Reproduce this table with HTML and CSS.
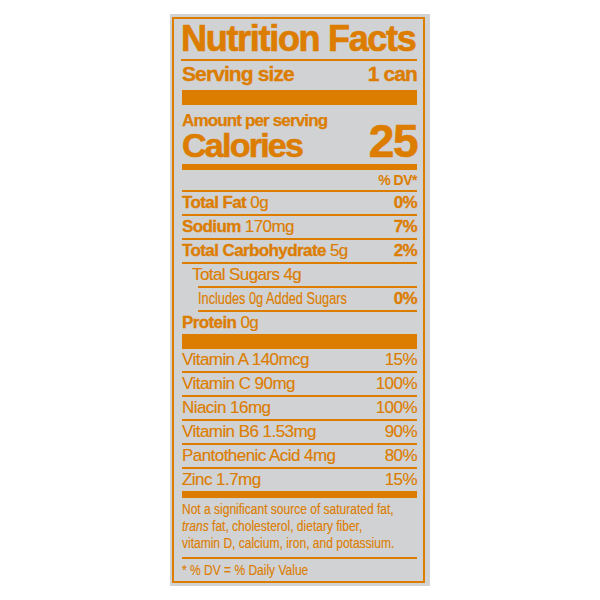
FILE: index.html
```html
<!DOCTYPE html>
<html lang="en">
<head>
<meta charset="utf-8">
<title>Nutrition Facts</title>
<link rel="stylesheet" href="styles.css">
</head>
<body>
<div class="panel">
  <section class="label">
    <h1 class="title">Nutrition Facts</h1>
    <div class="serving"><span>Serving size</span><span>1 can</span></div>
    <div class="bar bar-thick"></div>
    <div class="amount">Amount per serving</div>
    <div class="calories"><span class="cal-label">Calories</span><span class="cal-value">25</span></div>
    <div class="bar bar-med"></div>
    <div class="dv-head">% DV*</div>
    <ul class="rows">
      <li class="row"><span><b>Total Fat</b> 0g</span><b>0%</b></li>
      <li class="row"><span><b>Sodium</b> 170mg</span><b>7%</b></li>
      <li class="row"><span><b>Total Carbohydrate</b> 5g</span><b>2%</b></li>
      <li class="row indent1"><span>Total Sugars 4g</span></li>
      <li class="row indent2"><span class="narrow">Includes 0g Added Sugars</span><b>0%</b></li>
      <li class="row"><span><b>Protein</b> 0g</span></li>
    </ul>
    <div class="bar bar-thick bar-vit"></div>
    <ul class="rows vitamins">
      <li class="row"><span>Vitamin A 140mcg</span><span>15%</span></li>
      <li class="row"><span>Vitamin C 90mg</span><span>100%</span></li>
      <li class="row"><span>Niacin 16mg</span><span>100%</span></li>
      <li class="row"><span>Vitamin B6 1.53mg</span><span>90%</span></li>
      <li class="row"><span>Pantothenic Acid 4mg</span><span>80%</span></li>
      <li class="row"><span>Zinc 1.7mg</span><span>15%</span></li>
    </ul>
    <div class="bar bar-foot"></div>
    <div class="note-wrap">
      <p class="note">Not a significant source of saturated fat,<br><i>trans</i> fat, cholesterol, dietary fiber,<br>vitamin D, calcium, iron, and potassium.</p>
    </div>
    <div class="legend-wrap">
      <p class="legend">* % DV = % Daily Value</p>
    </div>
  </section>
</div>
</body>
</html>
```
FILE: styles.css
```css
html, body {
  margin: 0;
  padding: 0;
  background: #ffffff;
}
body {
  width: 600px;
  height: 600px;
  display: flex;
  align-items: center;
  justify-content: center;
  font-family: "Liberation Sans", Arial, sans-serif;
  color: #dc7d00;
}
.panel {
  width: 260px;
  box-sizing: border-box;
  padding: 3px 5px 3px 2px;
  background: #d1d2d4;
}
.label {
  border: 2px solid #dc7d00;
  padding: 0 6px 0 8px;
  overflow: hidden;
}
.title {
  margin: 0 0 0 -1px;
  font-size: 36px;
  line-height: 40px;
  font-weight: 700;
  letter-spacing: -1.3px;
  -webkit-text-stroke: 0.7px #dc7d00;
  border-bottom: 2px solid #dc7d00;
  white-space: nowrap;
}
.serving {
  display: flex;
  justify-content: space-between;
  padding-top: 1px;
  font-size: 21px;
  line-height: 24px;
  font-weight: 700;
  letter-spacing: -0.9px;
  -webkit-text-stroke: 0.35px #dc7d00;
}
.bar {
  background: #dc7d00;
}
.bar-thick {
  height: 15px;
  margin-top: 4px;
}
.bar-vit {
  margin-top: 0;
}
.bar-med {
  height: 6px;
}
.bar-foot {
  height: 7px;
}
.amount {
  padding-top: 7px;
  font-size: 17px;
  line-height: 18px;
  font-weight: 700;
  letter-spacing: -0.85px;
  -webkit-text-stroke: 0.25px #dc7d00;
}
.calories {
  display: flex;
  justify-content: space-between;
  align-items: baseline;
  height: 34px;
  font-weight: 700;
}
.cal-label {
  font-size: 34px;
  line-height: 26px;
  letter-spacing: -1.75px;
  -webkit-text-stroke: 0.6px #dc7d00;
}
.cal-value {
  font-size: 46px;
  line-height: 22px;
  letter-spacing: -1.5px;
  -webkit-text-stroke: 0.7px #dc7d00;
}
.dv-head {
  text-align: right;
  font-size: 14px;
  line-height: 20px;
  font-weight: 700;
  letter-spacing: -0.5px;
  border-bottom: 2px solid #dc7d00;
}
.rows {
  list-style: none;
  margin: 0;
  padding: 0;
}
.row {
  display: flex;
  justify-content: space-between;
  align-items: baseline;
  font-size: 17px;
  line-height: 22px;
  letter-spacing: -0.6px;
  border-bottom: 2px solid #dc7d00;
  white-space: nowrap;
  -webkit-text-stroke: 0.15px #dc7d00;
}
.row:last-child {
  border-bottom: 0;
}
.row b {
  font-weight: 700;
  -webkit-text-stroke: 0.3px #dc7d00;
}
.indent1 {
  padding-left: 10px;
  border-bottom: 0;
}
.indent2 {
  border-top: 2px solid #dc7d00;
  margin-left: 16px;
}
.narrow {
  min-width: 0;
  flex: 0 1 150px;
  font-size: 17px;
  letter-spacing: 0;
  transform: scaleX(0.75);
  transform-origin: left center;
}
.vitamins .row {
  font-size: 17px;
  letter-spacing: -0.55px;
}
.note-wrap {
  padding: 3px 0 5px;
  border-bottom: 2px solid #dc7d00;
}
.note {
  margin: 0;
  font-size: 15.5px;
  line-height: 16.7px;
  white-space: nowrap;
  transform: scaleX(0.775);
  transform-origin: left top;
  -webkit-text-stroke: 0.15px #dc7d00;
}
.legend-wrap {
  padding: 2.5px 0;
}
.legend {
  margin: 0;
  font-size: 15.5px;
  line-height: 17px;
  white-space: nowrap;
  transform: scaleX(0.775);
  transform-origin: left top;
  -webkit-text-stroke: 0.15px #dc7d00;
}
```
